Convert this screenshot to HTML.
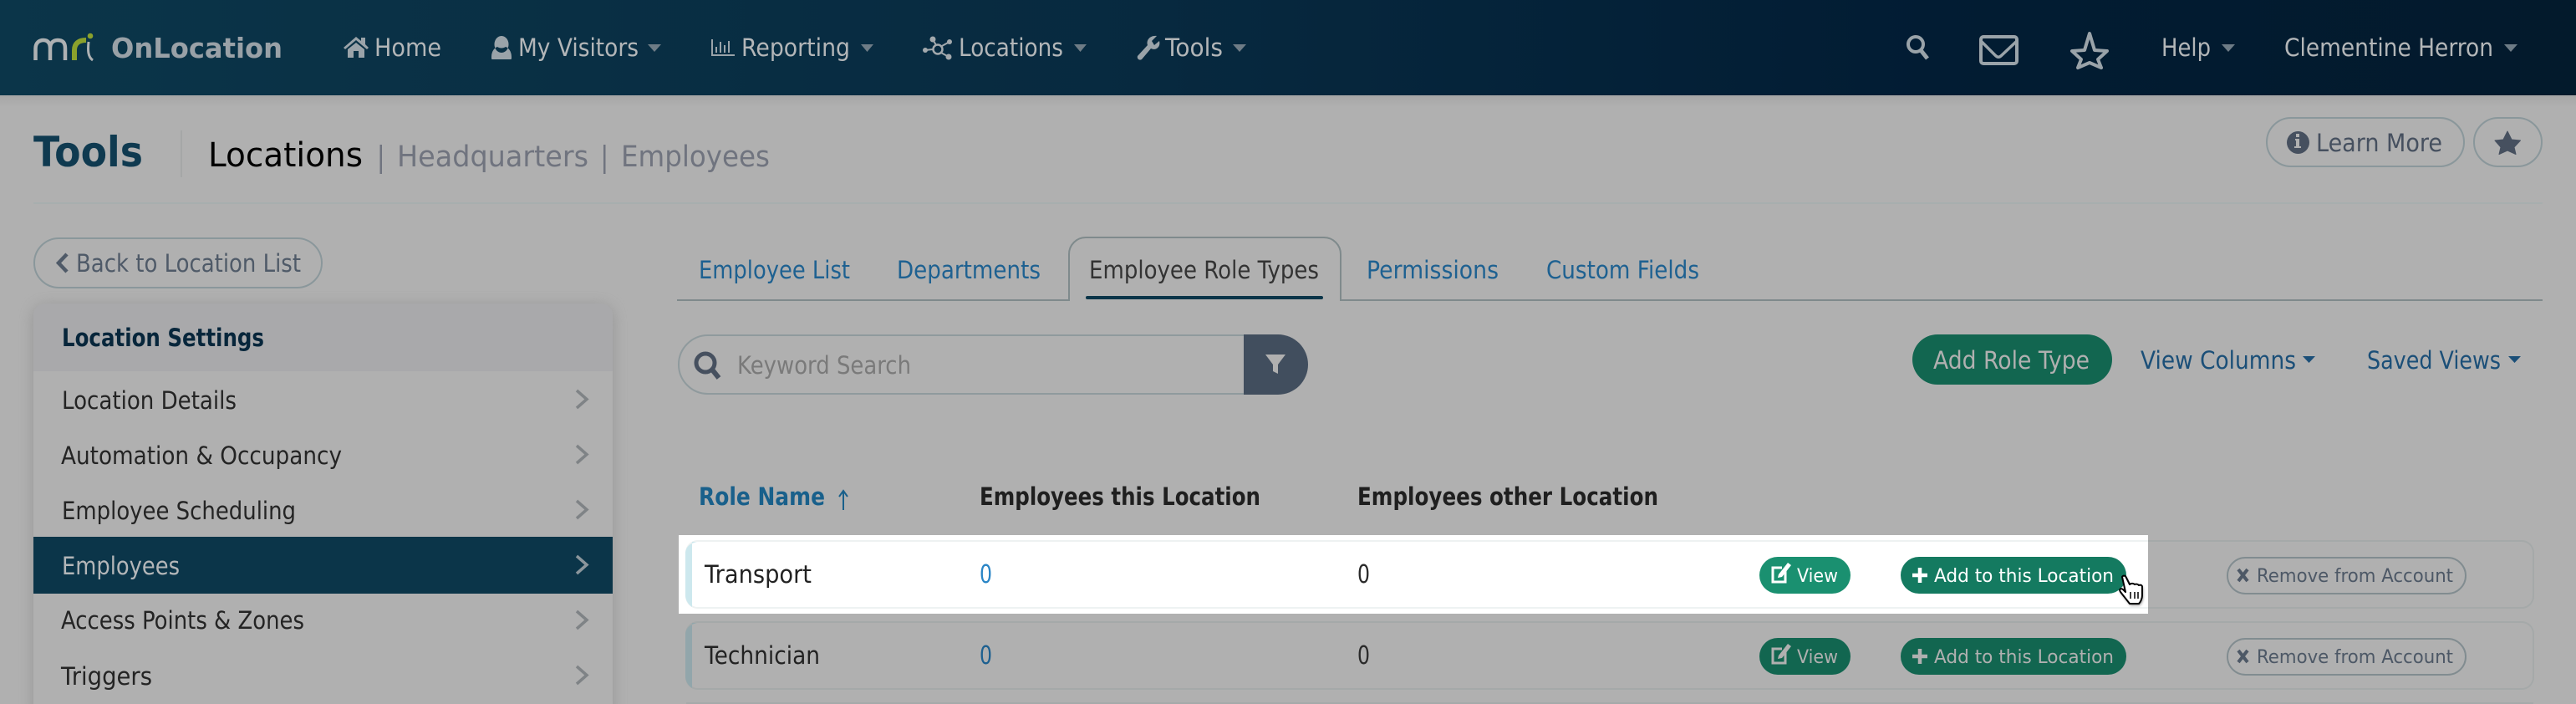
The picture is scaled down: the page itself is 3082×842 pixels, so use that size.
<!DOCTYPE html>
<html lang="en">
<head>
<meta charset="utf-8">
<title>Tools - Locations</title>
<style>
html,body{margin:0;padding:0;width:3082px;height:842px;overflow:hidden;background:#b0b0b0}
svg{display:block;position:absolute;left:0;top:0}
text{font-family:"DejaVu Sans","Liberation Sans",sans-serif;font-size:29px;transform:translateX(-1px)}
.b{font-weight:700}
</style>
</head>
<body>
<svg width="3082" height="842" viewBox="0 0 3082 842" xmlns="http://www.w3.org/2000/svg">
<defs>
<linearGradient id="hd" x1="0" x2="1" y1="0" y2="0">
<stop offset="0" stop-color="#0b3549"/><stop offset=".45" stop-color="#07293f"/><stop offset=".75" stop-color="#021c33"/><stop offset="1" stop-color="#031a2c"/>
</linearGradient>
<linearGradient id="sh" x1="0" x2="0" y1="0" y2="1">
<stop offset="0" stop-color="#a6a6a6"/><stop offset="1" stop-color="#b0b0b0"/>
</linearGradient>
<filter id="ps" x="-10%" y="-10%" width="120%" height="120%"><feGaussianBlur stdDeviation="9"/></filter>
<filter id="cs" x="-30%" y="-30%" width="160%" height="160%"><feGaussianBlur stdDeviation="1.5"/></filter>
</defs>

<rect width="3082" height="842" fill="#b0b0b0"/>
<rect y="114" width="3082" height="14" fill="url(#sh)"/>
<!-- header -->
<rect width="3082" height="114" fill="url(#hd)"/>
<!-- logo -->
<g fill="none" stroke-linecap="butt">
<path d="M42.500 72V58C42.500 51 47 48 52 48C57 48 60 51 60 58V72M60 58C60 51 64 48 69 48C75 48 78 51 78 58V72" stroke="#aeb1b3" stroke-width="4.500"/>
<path d="M89 72V60C89 52 94 48 103 48" stroke="#8ba12c" stroke-width="6"/>
<path d="M106 50C105 60 105 68 111 72" stroke="#aeb1b3" stroke-width="3"/>
</g>
<circle cx="108" cy="43" r="3.300" fill="#8ba12c"/>
<text class="b" x="134" y="69" style="font-size:33px" fill="#99a1a7" textLength="205" lengthAdjust="spacingAndGlyphs">OnLocation</text>

<!-- nav -->
<g fill="#b3b6b8">
<path d="M411 57L426 44L432 49V45H437V53L441 57L439 59L426 48L413 59ZM416 59L426 51L436 59V69H429V61H423V69H416Z" fill="#9aa3a9"/>
<text x="449" y="67" textLength="80" lengthAdjust="spacingAndGlyphs">Home</text>
<path d="M600 43a8.500 10 0 1 0 .01 0ZM589 71c-1 0-1-1-1-3 0-7 4-11 7-12 3 2 7 2 10 0 3 1 7 5 7 12 0 2 0 3-1 3Z" fill="#9aa3a9"/>
<text x="621" y="67" textLength="144" lengthAdjust="spacingAndGlyphs">My Visitors</text>
<path d="M775 53H791L783 62Z" fill="#6e7c86"/>
<path d="M852 47V66H879M857 63V56M862 63V50M867 63V54M872 63V49" fill="none" stroke="#9aa3a9" stroke-width="2"/>
<text x="888" y="67" textLength="130" lengthAdjust="spacingAndGlyphs">Reporting</text>
<path d="M1030 53H1045L1037.500 62Z" fill="#6e7c86"/>
<g fill="#a3a9ad"><circle cx="1116" cy="47" r="3.500"/><circle cx="1136" cy="50" r="3"/><circle cx="1107" cy="60" r="3"/><circle cx="1135" cy="68" r="3.500"/><circle cx="1122" cy="59" r="5.500" fill="none" stroke="#a3a9ad" stroke-width="2.500"/></g>
<path d="M1116 47L1120 54M1136 50L1127 55M1107 60L1116 59M1135 68L1126 63" stroke="#a3a9ad" stroke-width="2"/>
<text x="1148" y="67" textLength="125" lengthAdjust="spacingAndGlyphs">Locations</text>
<path d="M1285 53H1300L1292.500 62Z" fill="#6e7c86"/>
<path d="M1361 67L1373 54C1371 48 1376 42 1384 43L1378 49L1381 54L1387 49C1389 56 1383 61 1377 58L1366 71C1363 73 1360 70 1361 67Z" fill="#9aa3a9"/>
<text x="1395" y="67" textLength="69" lengthAdjust="spacingAndGlyphs">Tools</text>
<path d="M1475 53H1491L1483 62Z" fill="#6e7c86"/>

<circle cx="2292" cy="53" r="9" fill="none" stroke="#9aa3a9" stroke-width="4"/>
<path d="M2298 60L2306 70" stroke="#9aa3a9" stroke-width="5"/>
<rect x="2370" y="44" width="43" height="32" rx="3" fill="none" stroke="#9aa3a9" stroke-width="4"/>
<path d="M2371 50L2387 66C2390 69 2392 69 2395 66L2412 50" fill="none" stroke="#9aa3a9" stroke-width="3.500"/>
<path d="M2500 40L2506 60L2521 61L2510 71L2514 81L2500 75L2486 81L2490 71L2479 61L2494 60Z" fill="none" stroke="#9aa3a9" stroke-width="4" stroke-linejoin="round"/>
<text x="2587" y="67" textLength="59" lengthAdjust="spacingAndGlyphs">Help</text>
<path d="M2658 53H2674L2666 62Z" fill="#6e7c86"/>
<text x="2734" y="67" textLength="250" lengthAdjust="spacingAndGlyphs">Clementine Herron</text>
<path d="M2996 53H3012L3004 62Z" fill="#6e7c86"/>
</g>

<!-- page title -->
<text class="b" x="41" y="199" style="font-size:50px" fill="#0f3a50" textLength="131" lengthAdjust="spacingAndGlyphs">Tools</text>
<rect x="216" y="156" width="2" height="56" fill="#a5a7a7"/>
<text x="250" y="199" style="font-size:40px" fill="#000" textLength="185" lengthAdjust="spacingAndGlyphs">Locations</text>
<g fill="#70747f">
<rect x="454.500" y="173" width="2.500" height="35"/>
<text x="476" y="199" style="font-size:35px" textLength="229" lengthAdjust="spacingAndGlyphs">Headquarters</text>
<rect x="722" y="173" width="2.500" height="35"/>
<text x="744" y="199" style="font-size:35px" textLength="178" lengthAdjust="spacingAndGlyphs">Employees</text>
</g>
<rect x="40" y="242" width="3002" height="2" fill="#a7aeae"/>

<!-- learn more -->
<rect x="2712" y="141" width="236" height="58" rx="29" fill="none" stroke="#8a979b" stroke-width="2"/>
<circle cx="2749.500" cy="170.500" r="13.500" fill="#46505f"/>
<path d="M2746 166h5v9h2v2h-8v-2h2v-7h-1ZM2747 160h4v4h-4Z" fill="#b0b0b0"/>
<text x="2772" y="181" fill="#46505f" textLength="151" lengthAdjust="spacingAndGlyphs">Learn More</text>
<rect x="2960" y="141" width="81" height="58" rx="29" fill="none" stroke="#8a979b" stroke-width="2"/>
<path d="M3000 157L3005 167L3015.500 168L3008 176L3010 184.500L3000 180L2990 184.500L2992 176L2985 168L2995 167Z" fill="#46505f" stroke="#46505f" stroke-linejoin="round"/>

<!-- back button -->
<rect x="41" y="285" width="344" height="59" rx="29.500" fill="none" stroke="#8a979b" stroke-width="2"/>
<path d="M80 304L70 314.500L80 325" fill="none" stroke="#4f5a68" stroke-width="4.500"/>
<text x="92" y="325" fill="#4f5a68" textLength="269" lengthAdjust="spacingAndGlyphs">Back to Location List</text>

<!-- side panel -->
<rect x="40" y="366" width="693" height="500" rx="14" fill="#8e8e8e" filter="url(#ps)" opacity=".8"/>
<path d="M40 842V377a14 14 0 0 1 14-14H719a14 14 0 0 1 14 14V842Z" fill="#b0b0b0"/>
<path d="M40 444V377a14 14 0 0 1 14-14H719a14 14 0 0 1 14 14V444Z" fill="#a9a9ab"/>
<text class="b" x="75" y="414" fill="#07263b" textLength="242" lengthAdjust="spacingAndGlyphs">Location Settings</text>
<rect x="40" y="642" width="693" height="68" fill="#0b3549"/>
<g fill="#242424">
<text x="75" y="489" textLength="209" lengthAdjust="spacingAndGlyphs">Location Details</text>
<text x="74" y="555" textLength="336" lengthAdjust="spacingAndGlyphs">Automation &amp; Occupancy</text>
<text x="75" y="621" textLength="280" lengthAdjust="spacingAndGlyphs">Employee Scheduling</text>
<text x="75" y="687" fill="#b3b6b8" textLength="141" lengthAdjust="spacingAndGlyphs">Employees</text>
<text x="74" y="752" textLength="291" lengthAdjust="spacingAndGlyphs">Access Points &amp; Zones</text>
<text x="74" y="819" textLength="109" lengthAdjust="spacingAndGlyphs">Triggers</text>
</g>
<g fill="none" stroke="#7f8386" stroke-width="3.500">
<path d="M690 467L702 477.500L690 488"/>
<path d="M690 533L702 543.500L690 554"/>
<path d="M690 599L702 609.500L690 620"/>
<path d="M690 665L702 675.500L690 686" stroke="#8b969c"/>
<path d="M690 731L702 741.500L690 752"/>
<path d="M690 797L702 807.500L690 818"/>
</g>

<!-- tabs -->
<path d="M810 359H1279V304a20 20 0 0 1 20-20H1584a20 20 0 0 1 20 20V359H3042" fill="none" stroke="#7f8a8c" stroke-width="2"/>
<g fill="#1e6191">
<text x="837" y="333" textLength="181" lengthAdjust="spacingAndGlyphs">Employee List</text>
<text x="1074" y="333" textLength="172" lengthAdjust="spacingAndGlyphs">Departments</text>
<text x="1636" y="333" textLength="158" lengthAdjust="spacingAndGlyphs">Permissions</text>
<text x="1851" y="333" textLength="183" lengthAdjust="spacingAndGlyphs">Custom Fields</text>
</g>
<text x="1304" y="333" fill="#333" textLength="275" lengthAdjust="spacingAndGlyphs">Employee Role Types</text>
<rect x="1299" y="354" width="284" height="4" rx="2" fill="#0b3549"/>

<!-- search -->
<path d="M1488 401H847a35 35 0 0 0 0 70H1488" fill="none" stroke="#8f9a9d" stroke-width="2"/>
<path d="M1488 400H1529a36 36 0 0 1 0 72H1488Z" fill="#414e5e"/>
<circle cx="844" cy="434" r="11" fill="none" stroke="#46505f" stroke-width="5"/>
<path d="M852 442L860 452" stroke="#46505f" stroke-width="6"/>
<text x="883" y="447" fill="#7a7a7a" textLength="208" lengthAdjust="spacingAndGlyphs">Keyword Search</text>
<path d="M1514 424H1538L1529 436V447L1523 444V436Z" fill="#b0b0b0"/>

<!-- add role -->
<rect x="2288" y="400" width="239" height="60" rx="30" fill="#126650"/>
<text x="2314" y="441" fill="#b0b0b0" textLength="187" lengthAdjust="spacingAndGlyphs">Add Role Type</text>
<text x="2562" y="441" fill="#1b4f78" textLength="186" lengthAdjust="spacingAndGlyphs">View Columns</text>
<path d="M2755 426H2770L2762.500 434Z" fill="#1b4f78"/>
<text x="2833" y="441" fill="#1b4f78" textLength="160" lengthAdjust="spacingAndGlyphs">Saved Views</text>
<path d="M3001 426H3016L3008.500 434Z" fill="#1b4f78"/>

<!-- table head -->
<text class="b" x="837" y="604" fill="#19608b" textLength="151" lengthAdjust="spacingAndGlyphs">Role Name</text>
<path d="M1009 610V588M1004 594L1009 587L1014 594" fill="none" stroke="#19608b" stroke-width="2"/>
<text class="b" x="1173" y="604" fill="#1f1f1f" textLength="336" lengthAdjust="spacingAndGlyphs">Employees this Location</text>
<text class="b" x="1625" y="604" fill="#1f1f1f" textLength="360" lengthAdjust="spacingAndGlyphs">Employees other Location</text>

<!-- row 1 (dim part) -->
<rect x="821" y="647" width="2210" height="80" rx="14" fill="none" stroke="#a5a9a9" stroke-width="2"/>
<!-- highlight -->
<rect x="812" y="640" width="1758" height="94" fill="#fff"/>
<path d="M2570 647H835a14 14 0 0 0-14 14V713a14 14 0 0 0 14 14H2570" fill="none" stroke="#eef2f2" stroke-width="2"/>
<path d="M828 648H834C825 650 821 654 820 661V713C821 720 825 724 828 726Z" fill="#cde8ee"/>
<text x="844" y="697" fill="#222" textLength="128" lengthAdjust="spacingAndGlyphs">Transport</text>
<text x="1173" y="697" style="font-size:30px" fill="#2a85c6" textLength="15" lengthAdjust="spacingAndGlyphs">0</text>
<text x="1625" y="697" style="font-size:30px" fill="#2a2a2a" textLength="15" lengthAdjust="spacingAndGlyphs">0</text>
<!-- view highlighted -->
<rect x="2105" y="666" width="109" height="44" rx="22" fill="#1a9070"/>
<path d="M2136 683V696H2121V679H2132" fill="none" stroke="#fff" stroke-width="3"/>
<path d="M2128 687L2139 673L2143 676L2132 690L2127 691Z" fill="#fff"/>
<text x="2151" y="696" style="font-size:22px" fill="#fff" textLength="49" lengthAdjust="spacingAndGlyphs">View</text>
<!-- add highlighted -->
<rect x="2274" y="666" width="270" height="44" rx="22" fill="#147a60"/>
<path d="M2297 679V697M2288 688H2306" stroke="#fff" stroke-width="4.500"/>
<text x="2315" y="696" style="font-size:22px" fill="#fff" textLength="215" lengthAdjust="spacingAndGlyphs">Add to this Location</text>
<!-- remove -->
<rect x="2665" y="667" width="285" height="43" rx="21.500" fill="none" stroke="#818c90" stroke-width="2"/>
<path d="M2678 681L2689 695M2689 681L2678 695" stroke="#4d5866" stroke-width="4"/>
<text x="2701" y="696" style="font-size:22px" fill="#4d5866" textLength="235" lengthAdjust="spacingAndGlyphs">Remove from Account</text>

<!-- row 2 -->
<rect x="821" y="744" width="2210" height="80" rx="14" fill="none" stroke="#a5a9a9" stroke-width="2"/>
<path d="M828 745H834C825 747 821 751 820 758V810C821 817 825 821 828 823Z" fill="#92a6ab"/>
<text x="844" y="794" fill="#222" textLength="138" lengthAdjust="spacingAndGlyphs">Technician</text>
<text x="1173" y="794" style="font-size:30px" fill="#1d6090" textLength="15" lengthAdjust="spacingAndGlyphs">0</text>
<text x="1625" y="794" style="font-size:30px" fill="#2a2a2a" textLength="15" lengthAdjust="spacingAndGlyphs">0</text>
<rect x="2105" y="763" width="109" height="44" rx="22" fill="#126650"/>
<path d="M2136 780V793H2121V776H2132" fill="none" stroke="#b0b0b0" stroke-width="3"/>
<path d="M2128 784L2139 770L2143 773L2132 787L2127 788Z" fill="#b0b0b0"/>
<text x="2151" y="793" style="font-size:22px" fill="#b0b0b0" textLength="49" lengthAdjust="spacingAndGlyphs">View</text>
<rect x="2274" y="763" width="270" height="44" rx="22" fill="#126650"/>
<path d="M2297 776V794M2288 785H2306" stroke="#b0b0b0" stroke-width="4.500"/>
<text x="2315" y="793" style="font-size:22px" fill="#b0b0b0" textLength="215" lengthAdjust="spacingAndGlyphs">Add to this Location</text>
<rect x="2665" y="764" width="285" height="43" rx="21.500" fill="none" stroke="#818c90" stroke-width="2"/>
<path d="M2678 778L2689 792M2689 778L2678 792" stroke="#4d5866" stroke-width="4"/>
<text x="2701" y="793" style="font-size:22px" fill="#4d5866" textLength="235" lengthAdjust="spacingAndGlyphs">Remove from Account</text>
<rect x="821" y="840" width="2210" height="4" fill="#a5a9a9"/>

<!-- cursor -->
<path d="M2539 690C2540 688 2543 688 2544 691L2548 699C2550 697 2553 698 2554 699C2556 698 2558 699 2559 700C2561 699 2563 700 2563 702V712C2563 716 2561 720 2559 722H2548L2537 708C2535 705 2537 703 2540 705L2543 708Z" fill="#000" opacity=".45" filter="url(#cs)" transform="translate(1 2)"/>
<path d="M2539 690C2540 688 2543 688 2544 691L2548 699C2550 697 2553 698 2554 699C2556 698 2558 699 2559 700C2561 699 2563 700 2563 702V712C2563 716 2561 720 2559 722H2548L2537 708C2535 705 2537 703 2540 705L2543 708Z" fill="#fff" stroke="#000" stroke-width="2" stroke-linejoin="round"/>
<path d="M2549 708V716M2554 708V716M2558 708V716" stroke="#000" stroke-width="1.500"/>
</svg>
</body>
</html>
